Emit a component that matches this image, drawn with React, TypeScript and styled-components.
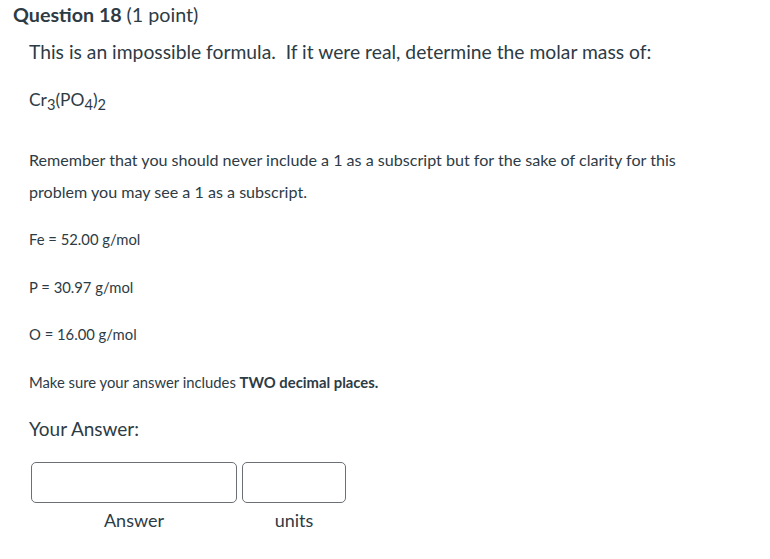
import React from "react";
import styled, { createGlobalStyle } from "styled-components";

const Global = createGlobalStyle`
  html, body { margin: 0; padding: 0; background: #ffffff; }
  body { font-family: Lato, "Noto Sans", "Liberation Sans", sans-serif; color: #2d3b45; }
  p { margin: 0; }
`;

const Page = styled.div`
  width: 770px;
  height: 559px;
  overflow: hidden;
  background: #fff;
`;

const Header = styled.h2`
  margin: 0;
  padding: 0 13px;
  font-size: 19.7px;
  line-height: 30px;
  font-weight: 700;
  color: #2d3b45;
`;

const Points = styled.span`
  font-weight: 400;
`;

const Body = styled.div`
  padding-left: 29px;
  width: 691px;
  display: flex;
  flex-direction: column;
`;

const Lead = styled.p<{ $top: number; $size: number }>`
  margin-top: ${(p) => p.$top}px;
  font-size: ${(p) => p.$size}px;
  line-height: 30px;
`;

const Sub = styled.sub`
  font-size: 0.84em;
  vertical-align: -0.3em;
  line-height: 0;
`;

const Note = styled.p`
  margin-top: 29px;
  font-size: 16.1px;
  line-height: 32px;
`;

const Small = styled.p<{ $top: number }>`
  margin-top: ${(p) => p.$top}px;
  font-size: 14.8px;
  line-height: 21px;
`;

const Prompt = styled.p`
  margin-top: 22px;
  font-size: 19px;
  line-height: 28px;
`;

const AnswerRow = styled.div`
  display: flex;
  gap: 5px;
  margin-top: 19px;
  padding-left: 2px;
`;

const Field = styled.label`
  display: flex;
  flex-direction: column;
  align-items: center;
`;

const Input = styled.div<{ $w: number }>`
  width: ${(p) => p.$w}px;
  height: 41px;
  box-sizing: border-box;
  border: 1px solid #6b7076;
  border-radius: 5px;
  background: #fff;
`;

const Caption = styled.span`
  margin-top: 5px;
  font-size: 18px;
  line-height: 24px;
`;

export default function App() {
  return (
    <Page>
      <Global />
      <Header>
        Question 18 <Points>(1 point)</Points>
      </Header>
      <Body>
        <Lead $top={7} $size={19.3}>
          This is an impossible formula.&nbsp; If it were real, determine the molar mass of:
        </Lead>
        <Lead $top={18} $size={17.4}>
          Cr<Sub>3</Sub>(PO<Sub>4</Sub>)<Sub>2</Sub>
        </Lead>
        <Note>
          Remember that you should never include a 1 as a subscript but for the sake of clarity for this
          problem you may see a 1 as a subscript.
        </Note>
        <Small $top={21}>Fe = 52.00 g/mol</Small>
        <Small $top={27}>P = 30.97 g/mol</Small>
        <Small $top={26}>O = 16.00 g/mol</Small>
        <Small $top={27}>
          Make sure your answer includes <b>TWO decimal places.</b>
        </Small>
        <Prompt>Your Answer:</Prompt>
        <AnswerRow>
          <Field>
            <Input $w={206} />
            <Caption>Answer</Caption>
          </Field>
          <Field>
            <Input $w={104} />
            <Caption>units</Caption>
          </Field>
        </AnswerRow>
      </Body>
    </Page>
  );
}
